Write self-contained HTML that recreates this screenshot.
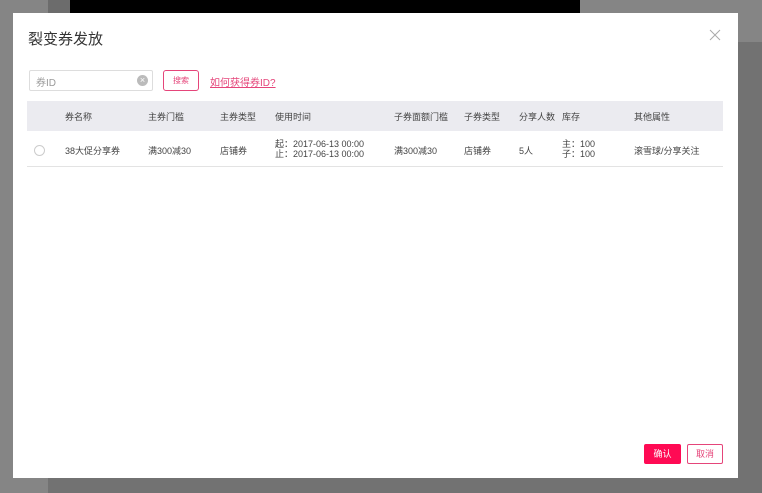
<!DOCTYPE html>
<html><head><meta charset="utf-8"><style>
*{margin:0;padding:0;box-sizing:border-box}
body{width:762px;height:493px;position:relative;overflow:hidden;background:#727272;font-family:"Liberation Sans","Noto Sans CJK SC",sans-serif;color:#333}
.a{position:absolute}
.t{position:absolute;font-size:9px;color:#444;white-space:nowrap}
</style></head><body>
<div class="a" style="left:0;top:0;width:48px;height:493px;background:#858585"></div>
<div class="a" style="left:48px;top:0;width:22px;height:13px;background:#6c6c6c"></div>
<div class="a" style="left:70px;top:0;width:510px;height:13px;background:#000"></div>
<div class="a" style="left:580px;top:0;width:182px;height:42px;background:#858585"></div>
<div class="a" style="left:13px;top:13px;width:725px;height:465px;background:#fff"></div>
<div class="a" style="left:28px;top:28px;font-size:15px;color:#333">裂变券发放</div>
<svg class="a" style="left:709px;top:29px" width="12" height="12"><path d="M1 1L11 11M11 1L1 11" stroke="#aaa" stroke-width="1"/></svg>
<div class="a" style="left:29px;top:70px;width:124px;height:21px;border:1px solid #ddd;border-radius:2px"></div>
<div class="t" style="left:36px;top:74px;font-size:10px;color:#999">券ID</div>
<div class="a" style="left:137px;top:75px;width:11px;height:11px;border-radius:50%;background:#bbb;color:#fff;font-size:9px;line-height:11px;text-align:center">×</div>
<div class="a" style="left:163px;top:70px;width:36px;height:21px;border:1px solid #e5457a;border-radius:3px;color:#e5457a;font-size:8px;line-height:19px;text-align:center">搜索</div>
<div class="t" style="left:210px;top:74px;font-size:10px;color:#e5457a;text-decoration:underline">如何获得券ID?</div>
<div class="a" style="left:27px;top:101px;width:696px;height:30px;background:#ebebf0"></div>
<div class="a" style="left:27px;top:166px;width:696px;height:1px;background:#e3e3e3"></div>
<div class="t" style="left:65px;top:110px">券名称</div>
<div class="t" style="left:148px;top:110px">主券门槛</div>
<div class="t" style="left:220px;top:110px">主券类型</div>
<div class="t" style="left:275px;top:110px">使用时间</div>
<div class="t" style="left:394px;top:110px">子券面额门槛</div>
<div class="t" style="left:464px;top:110px">子券类型</div>
<div class="t" style="left:519px;top:110px">分享人数</div>
<div class="t" style="left:562px;top:110px">库存</div>
<div class="t" style="left:634px;top:110px">其他属性</div>
<div class="a" style="left:34px;top:145px;width:11px;height:11px;border:1px solid #ccc;border-radius:50%"></div>
<div class="t" style="left:65px;top:144px">38大促分享券</div>
<div class="t" style="left:148px;top:144px">满300减30</div>
<div class="t" style="left:220px;top:144px">店铺券</div>
<div class="t" style="left:275px;top:139px;line-height:10px">起：2017-06-13 00:00<br>止：2017-06-13 00:00</div>
<div class="t" style="left:394px;top:144px">满300减30</div>
<div class="t" style="left:464px;top:144px">店铺券</div>
<div class="t" style="left:519px;top:144px">5人</div>
<div class="t" style="left:562px;top:139px;line-height:10px">主：100<br>子：100</div>
<div class="t" style="left:634px;top:144px">滚雪球/分享关注</div>
<div class="a" style="left:644px;top:444px;width:37px;height:20px;background:#ff0a54;border-radius:2px;color:#fff;font-size:9px;line-height:20px;text-align:center">确认</div>
<div class="a" style="left:687px;top:444px;width:36px;height:20px;border:1px solid #e5457a;border-radius:2px;color:#e5457a;font-size:9px;line-height:18px;text-align:center">取消</div>
</body></html>
